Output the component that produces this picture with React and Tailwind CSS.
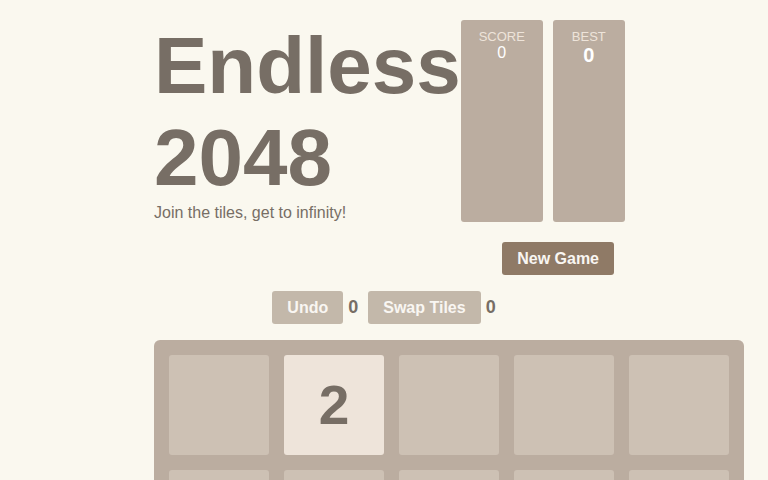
import { useState } from 'react';

const SIZE = 5;

function emptyBoard() {
  const cells = Array(SIZE * SIZE).fill(0);
  cells[1] = 2;
  return cells;
}

function ScoreBox({ label, value, strong, className = '' }) {
  return (
    <div className={`bg-[#bbada0] rounded-[3px] pt-[9px] text-center ${className}`}>
      <div className="text-[13px] uppercase text-[#eee4da] leading-[15px]">{label}</div>
      <div className={strong ? 'text-[20px] font-bold text-white leading-[22px]' : 'text-[16px] text-white leading-[18px]'}>
        {value}
      </div>
    </div>
  );
}

function Tile({ value }) {
  if (!value) {
    return <div className="w-[100px] h-[100px] rounded-[3px] bg-[#cdc1b4]" />;
  }
  return (
    <div className="w-[100px] h-[100px] rounded-[3px] bg-[#eee4da] flex items-center justify-center text-[55px] font-bold text-[#776e65]">
      {value}
    </div>
  );
}

export default function App() {
  const [board] = useState(emptyBoard);
  const [score] = useState(0);
  const [best] = useState(0);
  const [undos] = useState(0);
  const [swaps] = useState(0);

  return (
    <div className="min-h-screen bg-[#faf8ef] text-[#776e65] font-['Liberation_Sans',Arial,sans-serif] pt-5">
      <div className="w-[460px] mx-auto">
        {/* header: title + scores */}
        <div className="flex">
          <div className="shrink">
            <h1 className="text-[80px] font-bold leading-[92px] m-0">Endless 2048</h1>
            <p className="text-[16px] leading-[18px]">Join the tiles, get to infinity!</p>
          </div>
          <div className="flex shrink-0 gap-[10px]">
            <ScoreBox label="Score" value={score} className="w-[82px]" />
            <ScoreBox label="Best" value={best} strong className="w-[72px]" />
          </div>
        </div>

        <div className="flex justify-end mt-5">
          <button className="bg-[#8f7a66] text-[#f9f6f2] font-bold text-[16px] h-[33px] px-[15px] rounded-[3px]">
            New Game
          </button>
        </div>

        {/* power-ups */}
        <div className="flex items-center justify-center mt-4">
          <button className="bg-[#c3b8aa] text-[#f9f6f2] font-bold text-[16px] h-[33px] px-[15px] rounded-[3px]">
            Undo
          </button>
          <span className="font-bold text-[18px] mx-[5px]">{undos}</span>
          <button className="bg-[#c3b8aa] text-[#f9f6f2] font-bold text-[16px] h-[33px] px-[15px] rounded-[3px] ml-[5px]">
            Swap Tiles
          </button>
          <span className="font-bold text-[18px] ml-[5px]">{swaps}</span>
        </div>

        {/* board */}
        <div className="mt-4 w-[590px] bg-[#bbada0] rounded-[6px] p-[15px] grid grid-cols-5 gap-[15px]">
          {board.map((v, i) => (
            <Tile key={i} value={v} />
          ))}
        </div>
      </div>
    </div>
  );
}
